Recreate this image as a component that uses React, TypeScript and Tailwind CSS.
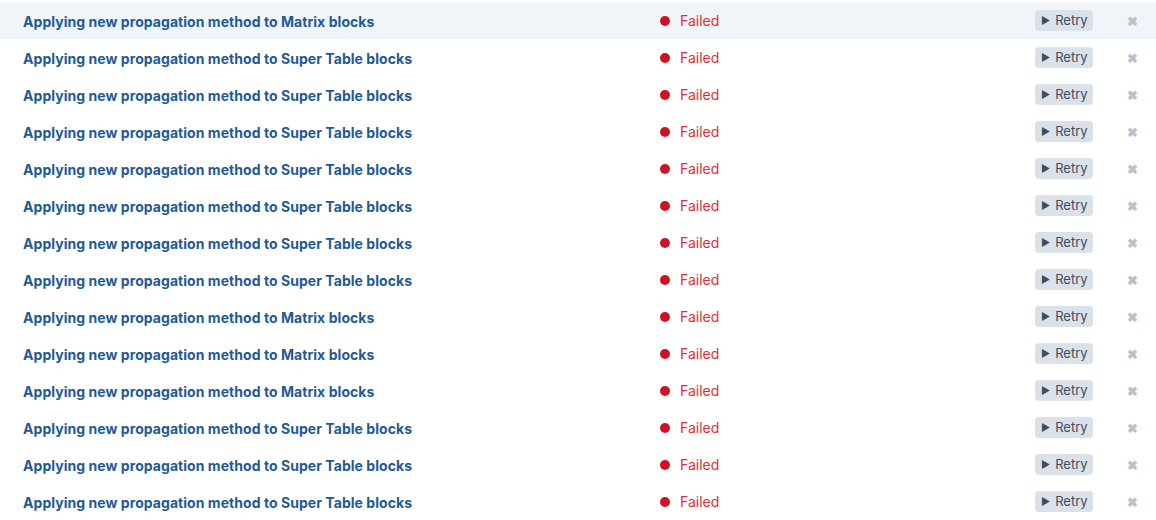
import React from "react";

const jobs = [
	"Matrix",
	"Super Table",
	"Super Table",
	"Super Table",
	"Super Table",
	"Super Table",
	"Super Table",
	"Super Table",
	"Matrix",
	"Matrix",
	"Matrix",
	"Super Table",
	"Super Table",
	"Super Table",
];

const App = () => {
	return (
		<div className="w-[1156px] h-[520px] overflow-hidden bg-white pt-[2px] font-['Inter','Liberation_Sans',sans-serif]">
			<table className="w-full table-fixed border-collapse">
				<colgroup>
					<col className="w-[660px]" />
					<col className="w-[375px]" />
					<col className="w-[92px]" />
					<col />
				</colgroup>
				<tbody>
					{jobs.map((type, i) => (
						<tr key={i} className={i === 0 ? "h-[37px] bg-[#f0f5fa]" : "h-[37px]"}>
							<td className="pl-[23px] align-middle whitespace-nowrap">
								<a className="text-[14px] font-bold text-[#1f5a94] tracking-[0.05px] cursor-pointer">
									Applying new propagation method to {type} blocks
								</a>
							</td>
							<td className="align-middle">
								<div className="flex items-center gap-[10px]">
									<span className="w-[10px] h-[10px] rounded-full bg-[#cf1124]"></span>
									<span className="text-[14px] text-[#e12d39]">Failed</span>
								</div>
							</td>
							<td className="align-middle">
								<button className="flex items-center gap-[5px] h-[21px] pl-[6px] pr-[5px] rounded-[4px] bg-[#dbe1e9] text-[13px] text-[#3f4d5a]">
									<span className="text-[10px]">▶</span>
									Retry
								</button>
							</td>
							<td className="align-middle pt-[2px] text-[#b9c1ca] text-[13px] font-bold">
								✖
							</td>
						</tr>
					))}
				</tbody>
			</table>
		</div>
	);
};

export default App;
